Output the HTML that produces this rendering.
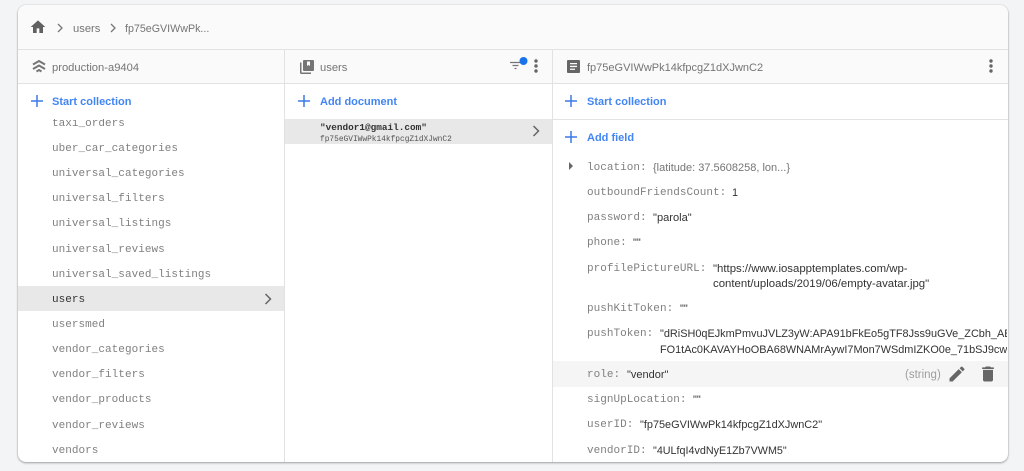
<!DOCTYPE html>
<html><head><meta charset="utf-8">
<style>
html,body{margin:0;padding:0;width:1024px;height:471px;overflow:hidden;background:#f3f4f6;}
body{position:relative;font-family:"Liberation Sans",sans-serif;}
#card{position:absolute;left:18px;top:5px;width:990px;height:457px;background:#fff;border-radius:8px;overflow:hidden;box-shadow:0 1px 2px rgba(60,64,67,.45),0 0 1px rgba(60,64,67,.3);}
.a{position:absolute;white-space:nowrap;}
.s{font-size:11.2px;line-height:16px;color:#757575;}
.m{font-family:"Liberation Mono",monospace;font-size:11px;letter-spacing:.03px;line-height:16px;color:#808080;}
.b{font-size:11px;line-height:16px;color:#4285f4;font-weight:bold;}
.v{font-size:10.9px;line-height:16px;color:#333;}
.r{position:absolute;background:#e8e8e8;}
.l{position:absolute;background:#e2e2e2;}
svg{position:absolute;display:block;}
</style></head><body>
<div id="card" style="left:18px;top:5px"></div>
<div class="a" style="left:18px;top:5px;width:990px;height:44px;background:#fafafa;border-radius:8px 8px 0 0"></div>
<div class="a" style="left:18px;top:50px;width:990px;height:33px;background:#fafafa"></div>
<div class="l" style="left:18px;top:49px;width:990px;height:1px"></div>
<div class="l" style="left:18px;top:83px;width:990px;height:1px"></div>
<div class="l" style="left:284px;top:49px;width:1px;height:413px"></div>
<div class="l" style="left:552px;top:49px;width:1px;height:413px"></div>
<div class="l" style="left:553px;top:119px;width:455px;height:1px"></div>

<svg style="left:30px;top:19px" width="16" height="16" viewBox="0 0 24 24"><path fill="#616161" d="M10 21v-7h4v7h5.5v-9H23L12 2 1 12h3.500v9z"/></svg>
<svg style="left:55px;top:23px" width="10" height="10" viewBox="0 0 10 10"><path fill="none" stroke="#777" stroke-width="1.300" d="M3 1l4 4-4 4"/></svg>
<div class="a s" style="left:73px;top:21px">users</div>
<svg style="left:108px;top:23px" width="10" height="10" viewBox="0 0 10 10"><path fill="none" stroke="#777" stroke-width="1.300" d="M3 1l4 4-4 4"/></svg>
<div class="a s" style="left:125px;top:21px;font-size:10.700px">fp75eGVIWwPk...</div>

<svg style="left:31px;top:59px" width="16" height="16" viewBox="0 0 16 16"><path fill="none" stroke="#757575" stroke-width="2" d="M2 5.500L8 2l6 3.500M2 10l6-3.500 6 3.500"/><path fill="none" stroke="#757575" stroke-width="2" d="M5.500 12.500L8 11l2.500 1.500"/></svg>
<div class="a s" style="left:52px;top:60px">production-a9404</div>

<svg style="left:299px;top:59px" width="16" height="16" viewBox="0 0 16 16"><path fill="#757575" d="M1 3.500h1.500V13.500H12V15H2.500A1.500 1.500 0 0 1 1 13.500z"/><path fill="#757575" fill-rule="evenodd" d="M5 1h9a1 1 0 0 1 1 1v9a1 1 0 0 1-1 1H5a1 1 0 0 1-1-1V2a1 1 0 0 1 1-1zm3 1.500V7l1.500-1L11 7V2.500z"/></svg>
<div class="a s" style="left:320px;top:60px">users</div>
<svg style="left:509px;top:57px" width="20" height="16" viewBox="0 0 20 16"><path stroke="#757575" stroke-width="1.300" d="M1 5.500h11M3.500 8.500h6M5.500 11.500h2"/><circle cx="14.500" cy="4" r="4" fill="#1a73e8"/></svg>
<svg style="left:532px;top:58px" width="8" height="16" viewBox="0 0 8 16"><circle cx="4" cy="3" r="1.700" fill="#666"/><circle cx="4" cy="8" r="1.700" fill="#666"/><circle cx="4" cy="13" r="1.700" fill="#666"/></svg>

<svg style="left:566px;top:59px" width="15" height="15" viewBox="0 0 15 15"><path fill-rule="evenodd" fill="#666" d="M2 1h11a1 1 0 0 1 1 1v11a1 1 0 0 1-1 1H2a1 1 0 0 1-1-1V2a1 1 0 0 1 1-1zm2 3v1.300h7V4zm0 2.800v1.300h7V6.800zm0 2.800v1.300h5V9.600z"/></svg>
<div class="a s" style="left:587px;top:60px;font-size:11px">fp75eGVIWwPk14kfpcgZ1dXJwnC2</div>
<svg style="left:987px;top:58px" width="8" height="16" viewBox="0 0 8 16"><circle cx="4" cy="3" r="1.700" fill="#666"/><circle cx="4" cy="8" r="1.700" fill="#666"/><circle cx="4" cy="13" r="1.700" fill="#666"/></svg>

<svg style="left:31px;top:95px" width="12" height="12" viewBox="0 0 12 12"><path stroke="#3b78e7" stroke-width="1.500" d="M6 0v12M0 6h12"/></svg>
<div class="a b" style="left:52px;top:94px">Start collection</div>
<svg style="left:298px;top:95px" width="12" height="12" viewBox="0 0 12 12"><path stroke="#3b78e7" stroke-width="1.500" d="M6 0v12M0 6h12"/></svg>
<div class="a b" style="left:320px;top:94px">Add document</div>
<svg style="left:565px;top:95px" width="12" height="12" viewBox="0 0 12 12"><path stroke="#3b78e7" stroke-width="1.500" d="M6 0v12M0 6h12"/></svg>
<div class="a b" style="left:587px;top:94px">Start collection</div>
<svg style="left:565px;top:131px" width="12" height="12" viewBox="0 0 12 12"><path stroke="#3b78e7" stroke-width="1.500" d="M6 0v12M0 6h12"/></svg>
<div class="a b" style="left:587px;top:130px">Add field</div>

<div class="a m" style="left:52px;top:116px">taxi_orders</div>
<div class="a" style="left:52px;top:110px;width:80px;height:9px;background:#fff"></div>
<div class="a m" style="left:52px;top:141px">uber_car_categories</div>
<div class="a m" style="left:52px;top:166px">universal_categories</div>
<div class="a m" style="left:52px;top:191px">universal_filters</div>
<div class="a m" style="left:52px;top:216px">universal_listings</div>
<div class="a m" style="left:52px;top:242px">universal_reviews</div>
<div class="a m" style="left:52px;top:267px">universal_saved_listings</div>
<div class="r" style="left:18px;top:286px;width:266px;height:25px"></div>
<div class="a m" style="left:52px;top:292px;color:#333">users</div>
<svg style="left:263px;top:293px" width="10" height="12" viewBox="0 0 10 12"><path fill="none" stroke="#666" stroke-width="1.500" d="M2.500 1l5 5-5 5"/></svg>
<div class="a m" style="left:52px;top:317px">usersmed</div>
<div class="a m" style="left:52px;top:342px">vendor_categories</div>
<div class="a m" style="left:52px;top:367px">vendor_filters</div>
<div class="a m" style="left:52px;top:392px">vendor_products</div>
<div class="a m" style="left:52px;top:418px">vendor_reviews</div>
<div class="a m" style="left:52px;top:443px">vendors</div>

<div class="r" style="left:285px;top:119px;width:267px;height:25px"></div>
<div class="a m" style="left:320px;top:120px;color:#333;font-weight:bold;font-size:9.400px;letter-spacing:0">"vendor1@gmail.com"</div>
<div class="a m" style="left:320px;top:132px;color:#555;font-size:7.850px;letter-spacing:0">fp75eGVIWwPk14kfpcgZ1dXJwnC2</div>
<svg style="left:531px;top:125px" width="10" height="12" viewBox="0 0 10 12"><path fill="none" stroke="#666" stroke-width="1.500" d="M2.500 1l5 5-5 5"/></svg>

<svg style="left:568px;top:162px" width="6" height="8" viewBox="0 0 6 8"><path fill="#666" d="M1 0l4 4-4 4z"/></svg>
<div class="a m" style="left:587px;top:160px">location:</div>
<div class="a v" style="left:653px;top:160px;color:#757575;font-size:11px">{latitude: 37.5608258, lon...}</div>
<div class="a m" style="left:587px;top:185px">outboundFriendsCount:</div>
<div class="a v" style="left:732px;top:185px">1</div>
<div class="a m" style="left:587px;top:210px">password:</div>
<div class="a v" style="left:653px;top:210px;font-size:11.100px">"parola"</div>
<div class="a m" style="left:587px;top:235px">phone:</div>
<div class="a v" style="left:633px;top:235px">""</div>
<div class="a m" style="left:587px;top:261px">profilePictureURL:</div>
<div class="a v" style="left:713px;top:261px;font-size:11.400px">"https://www.iosapptemplates.com/wp-</div>
<div class="a v" style="left:713px;top:276px;font-size:11.400px">content/uploads/2019/06/empty-avatar.jpg"</div>
<div class="a m" style="left:587px;top:301px">pushKitToken:</div>
<div class="a v" style="left:680px;top:301px">""</div>
<div class="a m" style="left:587px;top:326px">pushToken:</div>
<div class="a" style="left:660px;top:326px;width:347px;height:32px;overflow:hidden"><div class="a v" style="left:0;top:0">"dRiSH0qEJkmPmvuJVLZ3yW:APA91bFkEo5gTF8Jss9uGVe_ZCbh_AEdxyz</div><div class="a v" style="left:0;top:16px">FO1tAc0KAVAYHoOBA68WNAMrAywI7Mon7WSdmIZKO0e_71bSJ9cw2xyz</div></div>
<div class="r" style="left:553px;top:361px;width:455px;height:26px;background:#f5f5f5"></div>
<div class="a m" style="left:587px;top:367px">role:</div>
<div class="a v" style="left:627px;top:367px;font-size:11px">"vendor"</div>
<div class="a s" style="left:905px;top:367px;color:#9e9e9e;font-size:11.500px">(string)</div>
<svg style="left:947px;top:364px" width="20" height="20" viewBox="0 0 24 24"><path fill="#666" d="M3 17.250V21h3.750L17.810 9.940l-3.750-3.750L3 17.250zM20.710 7.040a1 1 0 0 0 0-1.410l-2.340-2.340a1 1 0 0 0-1.410 0l-1.830 1.830 3.750 3.750 1.830-1.830z"/></svg>
<svg style="left:978px;top:364px" width="20" height="20" viewBox="0 0 24 24"><path fill="#666" d="M6 19c0 1.100.9 2 2 2h8c1.100 0 2-.9 2-2V7H6v12zM19 4h-3.500l-1-1h-5l-1 1H5v2h14V4z"/></svg>
<div class="a m" style="left:587px;top:392px">signUpLocation:</div>
<div class="a v" style="left:693px;top:392px">""</div>
<div class="a m" style="left:587px;top:417px">userID:</div>
<div class="a v" style="left:640px;top:417px">"fp75eGVIWwPk14kfpcgZ1dXJwnC2"</div>
<div class="a m" style="left:587px;top:443px">vendorID:</div>
<div class="a v" style="left:653px;top:443px;font-size:10.750px">"4ULfqI4vdNyE1Zb7VWM5"</div>
</body></html>
